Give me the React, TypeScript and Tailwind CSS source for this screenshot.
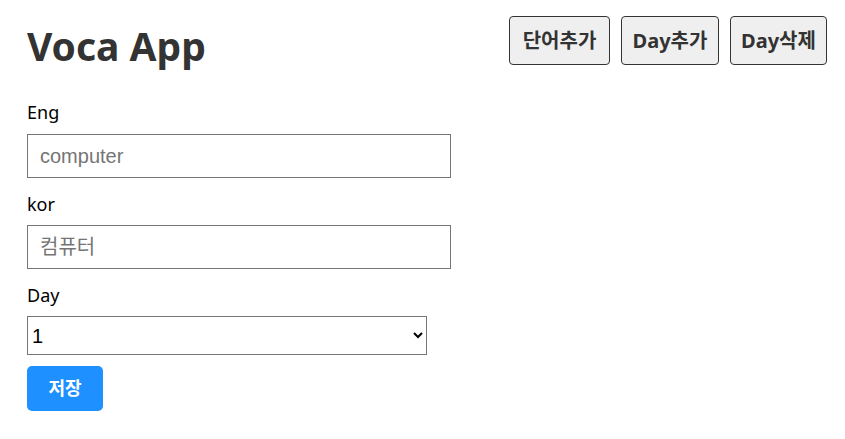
import React from 'react';

const font = { fontFamily: '"Noto Sans", "Noto Sans CJK KR", sans-serif' };

const actions = [
  { label: '단어추가', w: 'w-[101px]' },
  { label: 'Day추가', w: 'w-[98px]' },
  { label: 'Day삭제', w: 'w-[97px]' },
];

export default function App() {
  return (
    <div className="min-h-screen bg-white text-[#333]" style={font}>
      {/* Header */}
      <div className="flex items-start justify-between pl-[27px] pr-[18px]">
        <h1 className="mt-[22px] text-[39px] font-bold leading-[48px] text-[#333]">Voca App</h1>
        <div className="mt-[16px] flex gap-[11px]">
          {actions.map((a) => (
            <button
              key={a.label}
              className={`${a.w} h-[49px] rounded-[4px] border border-[#333] bg-[#efefef] text-[20px] font-bold text-[#333]`}
            >
              {a.label}
            </button>
          ))}
        </div>
      </div>

      {/* Form */}
      <form className="mt-[29px] flex flex-col pl-[27px]">
        <label className="text-[18px] leading-[26px] text-black">Eng</label>
        <input
          placeholder="computer"
          className="mt-[9px] h-[44px] w-[424px] border border-[#767676] px-[12px] text-[20px] placeholder:text-[#757575]"
          style={{ fontFamily: '"Liberation Sans", Arial, sans-serif' }}
        />
        <label className="mt-[13px] text-[18px] leading-[26px] text-black">kor</label>
        <input
          placeholder="컴퓨터"
          className="mt-[8px] h-[44px] w-[424px] border border-[#767676] px-[12px] text-[20px] placeholder:text-[#757575]"
          style={{ fontFamily: '"Liberation Sans", "Noto Sans CJK KR", sans-serif' }}
        />
        <label className="mt-[13px] text-[18px] leading-[26px] text-black">Day</label>
        <select
          className="mt-[8px] h-[39px] w-[400px] appearance-auto border border-[#767676] bg-white pl-0 text-[20px] text-black"
          style={{ fontFamily: '"Liberation Sans", Arial, sans-serif' }}
          defaultValue="1"
        >
          <option value="1">1</option>
          <option value="2">2</option>
          <option value="3">3</option>
        </select>
        <button
          type="button"
          className="mt-[11px] h-[45px] w-[76px] rounded-[5px] bg-[#1e90ff] text-[18px] font-bold text-white"
        >
          저장
        </button>
      </form>
    </div>
  );
}
